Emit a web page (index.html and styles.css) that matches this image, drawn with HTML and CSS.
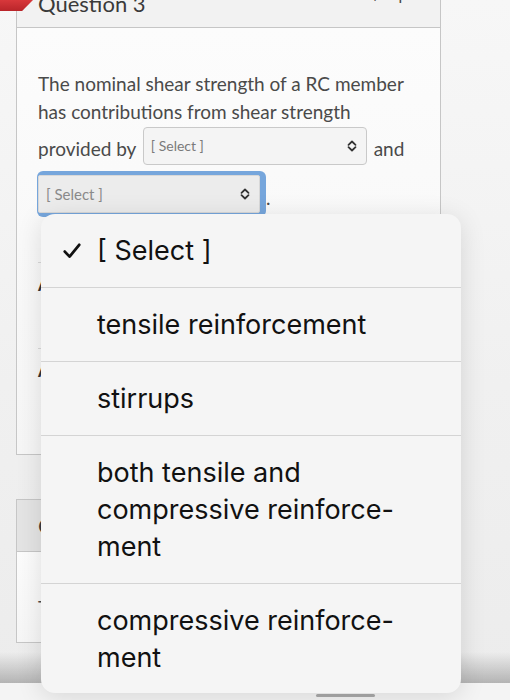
FILE: index.html
```html
<!DOCTYPE html>
<html lang="en">
<head>
<meta charset="utf-8">
<title>Question 3</title>
<link rel="stylesheet" href="styles.css">
</head>
<body>
<div class="screen">
  <div class="tag"></div>
  <div class="quiz">
    <section class="card">
      <header class="card-head">
        <h2 class="q-title">Question 3</h2>
        <span class="q-pts">0.5 / 1 pts</span>
      </header>
      <div class="card-body">
        <p class="q-text">The nominal shear strength of a RC member<br>has contributions from shear strength<br>provided by <span class="sel"><span class="sel-inner"><span class="sel-label">[ Select ]</span><svg class="chev" width="10" height="12" viewBox="0 0 10 12"><path d="M1.5 4.8 L5 1.5 L8.5 4.8 M1.5 7.2 L5 10.5 L8.5 7.2" fill="none" stroke="#333" stroke-width="1.8" stroke-linecap="round" stroke-linejoin="round"/></svg></span></span> and <span class="sel-ring"><span class="sel sel-focused"><span class="sel-inner"><span class="sel-label">[ Select ]</span><svg class="chev" width="10" height="12" viewBox="0 0 10 12"><path d="M1.5 4.8 L5 1.5 L8.5 4.8 M1.5 7.2 L5 10.5 L8.5 7.2" fill="none" stroke="#333" stroke-width="1.8" stroke-linecap="round" stroke-linejoin="round"/></svg></span></span></span>.</p>
        <div class="answers">
          <div class="answer">Answer 1:</div>
          <div class="answer">Answer 2:</div>
        </div>
      </div>
    </section>
    <section class="card">
      <header class="card-head card-head-mid">
        <h2 class="q-title">Question 4</h2>
      </header>
      <div class="card-body">
        <p class="q-text">The shear strength provided by concrete</p>
      </div>
    </section>
  </div>
  <div class="shade"></div>
  <div class="homebar"><span class="home-ind"></span></div>
  <div class="picker">
    <div class="opt">
      <svg class="check" width="18" height="16" viewBox="0 0 18 16"><path d="M1.8 8.6 L6.6 13.6 L16.2 1.8" fill="none" stroke="#111" stroke-width="2.8" stroke-linecap="round" stroke-linejoin="round"/></svg>
      <span class="opt-text">[ Select ]</span>
    </div>
    <div class="opt"><span class="opt-text">tensile reinforcement</span></div>
    <div class="opt"><span class="opt-text">stirrups</span></div>
    <div class="opt"><span class="opt-text">both tensile and<br>compressive reinforce-<br>ment</span></div>
    <div class="opt opt-last"><span class="opt-text">compressive reinforce-<br>ment</span></div>
  </div>
</div>
</body>
</html>
```
FILE: styles.css
```css
* { box-sizing: border-box; }
html, body { margin: 0; padding: 0; }
body {
  width: 510px;
  height: 700px;
  overflow: hidden;
  background: linear-gradient(to bottom, #f7f7f7 0, #f0f0f0 55%, #ececec 100%);
  font-family: Lato, "Open Sans", sans-serif;
}
.screen { position: relative; width: 510px; height: 700px; overflow: hidden; }

.tag {
  position: absolute; left: 0; top: 0; z-index: 2;
  width: 33px; height: 11px;
  background: linear-gradient(#d8383b, #b9252a);
  clip-path: polygon(0 0, 100% 0, 67% 100%, 0 100%);
}

.quiz {
  margin-top: -20px;
  padding-left: 16px;
  width: 441px;
  display: flex;
  flex-direction: column;
  gap: 44px;
}
.card { border: 1px solid #c6c6c6; background: #fbfbfb; }
.card-head {
  height: 47px;
  background: #f2f2f2;
  border-bottom: 1px solid #c6c6c6;
  display: flex;
  justify-content: space-between;
  align-items: flex-start;
  padding: 10px 20px 0 21px;
}
.card-head-mid { height: 52px; align-items: center; padding-top: 0; background: #e4e4e4; }
.q-title { margin: 0; font-size: 22px; font-weight: 400; line-height: 26px; color: #3a3a3a; }
.q-pts { font-size: 16px; line-height: 20px; margin-top: -7px; color: #444; }

.card-body {
  padding: 42px 21px 20px 21px;
  background: linear-gradient(to bottom, #fcfcfc, #f6f6f6);
}
.q-text { margin: 0; font-size: 19px; line-height: 28px; color: #4a4a4a; }

.sel {
  display: inline-block;
  overflow: hidden;
  width: 224px;
  height: 38px;
  margin: 1px 2px 0 2px;
  vertical-align: -9px;
  border: 1px solid #c9c9c9;
  border-radius: 4px;
  background: #f4f4f4;
}
.sel-inner {
  display: flex;
  height: 100%;
  align-items: center;
  justify-content: space-between;
  padding: 0 9px 0 7px;
}
.sel-label { font-size: 14px; line-height: 16px; color: #7a7a7a; }
.chev { display: block; }

.sel-ring {
  display: inline-block;
  overflow: hidden;
  margin: 6px 0 0 -1px;
  padding: 4px 6px 4px 1px;
  vertical-align: -12px;
  background: #76a6dc;
  border-radius: 6px;
}
.sel-focused {
  display: block;
  width: 222px;
  margin: 0;
  border-color: #d8d8d8;
  border-radius: 2px;
  background: #ececec;
}
.sel-focused .sel-label { font-size: 15px; color: #8a8a8a; }

.answers { margin-top: 45px; }
.answer {
  border-top: 1px solid #d8d8d8;
  padding: 10px 0 53px;
  font-size: 18px;
  line-height: 22px;
  font-weight: 700;
  color: #333;
}

.shade {
  position: absolute; left: 0; right: 0; top: 652px; height: 31px; z-index: 3;
  background: linear-gradient(to bottom, rgba(0,0,0,0), rgba(0,0,0,0.24));
}
.homebar {
  position: absolute; left: 0; right: 0; top: 683px; bottom: 0; z-index: 4;
  background: #f4f4f4;
  padding: 11px 0 0 316px;
}
.home-ind { display: block; width: 59px; height: 3px; border-radius: 2px; background: #a9a9a9; }

.picker {
  position: absolute; left: 41px; top: 214px; z-index: 5;
  width: 420px;
  background: #f5f5f5;
  border-radius: 14px;
  box-shadow: 0 4px 26px rgba(0,0,0,0.12);
  overflow: hidden;
  font-family: Inter, "Noto Sans", sans-serif;
  font-size: 27px;
  line-height: 37px;
  color: #111;
}
.opt {
  display: grid;
  grid-template-columns: 56px 1fr;
  padding: 18px 20px 18px 0;
}
.opt + .opt { border-top: 1px solid #d4d4d4; }
.opt-last { padding-bottom: 17px; }
.check { margin-left: 22px; align-self: center; }
.opt-text { grid-column: 2; }
```
